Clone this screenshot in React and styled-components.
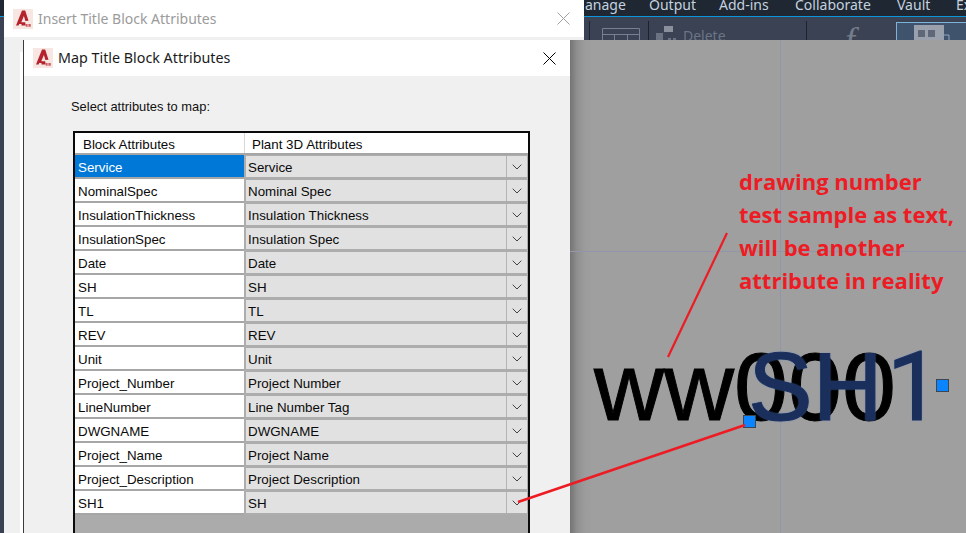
import React from "react";
import styled, { createGlobalStyle } from "styled-components";

const Global = createGlobalStyle`
  html, body { margin: 0; padding: 0; background: #3a4150; overflow: hidden; }
  #root { width: 966px; height: 533px; }
`;

const Desktop = styled.div`
  position: relative;
  width: 966px;
  height: 533px;
  overflow: hidden;
  display: flex;
  flex-direction: column;
  background: #3a4150;
  font-family: "Liberation Sans", Arial, sans-serif;
`;

/* Host application: ribbon + drawing canvas */
const Menu = styled.div`
  height: 16px;
  flex: none;
  display: flex;
  align-items: flex-end;
  overflow: hidden;
  padding-left: 585px;
  background: #1f2733;
  border-bottom: 1px solid #0b96dc;
  font: 14px/20px "Noto Sans", sans-serif;
  color: #c4d2df;
`;
const MenuItem = styled.span`
  flex: none;
  width: ${(p) => p.$w}px;
  padding-bottom: 1px;
`;
const Ribbon = styled.div`
  height: 23px;
  flex: none;
  display: flex;
  padding-left: 589px;
  overflow: hidden;
  background: #3a4253;
  color: #6f7888;
`;
const RibbonSep = styled.span`
  flex: none;
  width: 1px;
  height: 23px;
  margin-top: 4px;
  background: #1d222c;
`;
const RibbonSlot = styled.div`
  flex: none;
  width: ${(p) => p.$w}px;
  display: flex;
  align-items: flex-start;
  gap: 3px;
  padding-top: ${(p) => p.$top || 5}px;
  padding-left: ${(p) => p.$left || 0}px;
  box-sizing: border-box;
`;
const DeleteLabel = styled.span`
  font: 14px/20px "Noto Sans", sans-serif;
  color: #6c7586;
`;
const FLabel = styled.span`
  font: italic 36px/36px "Liberation Serif", serif;
  color: #757d8b;
`;
const ActiveTool = styled.div`
  flex: none;
  width: 72px;
  height: 26px;
  margin-top: 5px;
  padding: 2px 0 0 17px;
  box-sizing: border-box;
  background: #40536c;
  border: 1px solid #7fb2d8;
`;

const Canvas = styled.main`
  position: relative;
  z-index: 2;
  flex: 1;
  margin-left: 570px;
  overflow: hidden;
  background: linear-gradient(90deg, #747474 0, #8f8f8f 7px, #9c9c9c 15px, #9f9f9f 22px);
`;
const AxisV = styled.i`
  position: absolute;
  left: 210px;
  top: 0;
  bottom: 0;
  width: 1px;
  background: #9296aa;
`;
const AxisH = styled.i`
  position: absolute;
  left: 0;
  right: 0;
  top: 211px;
  height: 1px;
  background: #9296aa;
`;
const Note = styled.div`
  position: absolute;
  left: 169px;
  top: 125px;
  font: 700 22px/33px "Open Sans", sans-serif;
  color: #ed1c24;
  white-space: nowrap;
`;
const DrawingText = styled.div`
  position: absolute;
  left: ${(p) => p.$x}px;
  top: ${(p) => p.$y}px;
  font: 400 97px/110px "Liberation Sans", sans-serif;
  white-space: nowrap;
  color: ${(p) => p.$color};
  -webkit-text-stroke: 1px ${(p) => p.$color};
  text-shadow: ${(p) => (p.$glow ? "0 0 2px #5f82c4" : "none")};
`;
const FootlessDigit = styled.span`
  font-family: Roboto, sans-serif;
  margin-left: 4px;
`;
const Grip = styled.i`
  position: absolute;
  left: ${(p) => p.$x}px;
  top: ${(p) => p.$y}px;
  width: 13px;
  height: 13px;
  box-sizing: border-box;
  background: #0a84ff;
  border: 1px solid #3d4650;
`;

/* Dialogs */
const BackDialog = styled.section`
  position: absolute;
  z-index: 1;
  left: 4px;
  top: 0;
  width: 580px;
  height: 533px;
  display: flex;
  flex-direction: column;
  background: #f0f0f0;
`;
const TitleBar = styled.header`
  flex: none;
  height: ${(p) => p.$h}px;
  display: flex;
  align-items: center;
  padding: 0 ${(p) => p.$right}px 0 ${(p) => p.$left}px;
  box-sizing: border-box;
  background: #fff;
  color: ${(p) => (p.$dim ? "#9b9b9b" : "#1a1a1a")};
  font: ${(p) => (p.$dim ? 14 : 14.3)}px/20px "Noto Sans", sans-serif;
`;
const TitleText = styled.span`
  flex: 1;
  margin-left: 5px;
  white-space: nowrap;
`;
const InnerEdge = styled.div`
  flex: 1;
  width: 3px;
  margin: 15px 0 0 16px;
  background: #fff;
`;
const FrontDialog = styled.section`
  position: absolute;
  z-index: 3;
  left: 23px;
  top: 40px;
  width: 547px;
  height: 493px;
  box-sizing: border-box;
  border-left: 1px solid #3c3c3c;
  display: flex;
  flex-direction: column;
  background: #f0f0f0;
`;
const DialogBody = styled.div`
  flex: 1;
  display: flex;
  flex-direction: column;
  padding: 24px 0 0 47px;
`;
const Prompt = styled.div`
  height: 31px;
  font: 12.9px/14px "Liberation Sans", sans-serif;
  color: #111;
`;
const Table = styled.div`
  flex: 1;
  width: 457px;
  box-sizing: border-box;
  margin-left: 2px;
  border: 2px solid #0a0a0a;
  border-bottom: none;
  background: #ababab;
  font: 13.35px/15px "Liberation Sans", sans-serif;
  color: #0a0a0a;
`;
const HeaderRow = styled.div`
  display: grid;
  grid-template-columns: 170px 283px;
  height: 22px;
  box-sizing: border-box;
  background: #fff;
  border-bottom: 2px solid #a6a6a6;
`;
const HeaderCell = styled.div`
  padding: ${(p) => (p.$first ? "4px 0 0 8px" : "4px 0 0 7px")};
  border-right: ${(p) => (p.$first ? "1px solid #d8d8d8" : "none")};
`;
const Row = styled.div`
  display: grid;
  grid-template-columns: 169px 284px;
  height: 24px;
`;
const NameCell = styled.div`
  box-sizing: border-box;
  padding: 5px 0 0 3px;
  background: ${(p) => (p.$selected ? "#0078d7" : "#fff")};
  color: ${(p) => (p.$selected ? "#fff" : "#0a0a0a")};
  border-bottom: 2px solid #a6a6a6;
`;
const Combo = styled.div`
  box-sizing: border-box;
  display: flex;
  background: #e1e1e1;
  border: 2px solid #adadad;
  border-width: 1px 1px 2px 2px;
`;
const ComboValue = styled.span`
  flex: 1;
  padding: 4px 0 0 2px;
`;
const ComboArrow = styled.span`
  flex: none;
  width: 20px;
  display: flex;
  align-items: center;
  justify-content: center;
  border-left: 1px solid #b4b4b4;
  color: #444;
`;
const Overlay = styled.svg`
  position: absolute;
  z-index: 5;
  left: 0;
  top: 0;
  pointer-events: none;
`;

const Logo = () => (
  <svg width="20" height="20" viewBox="0 0 20 20">
    <rect width="20" height="20" fill="#f7e6e1" />
    <path d="M3 16.5 9 1.5h3.2l3.3 10.3-3.1.3-1.5-5-2.6 6.2h3.9l.5 3.2H8.500v-1.600H6.200l-.6 1.600z" fill="#b6212e" />
    <path d="M12.800 15h1v2.800h-1zM14.500 15h1v2.800h-1zM16.200 15h1.400v2.800h-1.400z" fill="#c23a44" />
  </svg>
);
const CloseIcon = ({ color }) => (
  <svg width="13" height="13" viewBox="0 0 13 13">
    <path d="M.5.5l12 12M12.500.5l-12 12" stroke={color} strokeWidth="1" fill="none" />
  </svg>
);
const Chevron = () => (
  <svg width="10" height="6" viewBox="0 0 10 6">
    <path d="M.7.7 5 5l4.300-4.300" stroke="currentColor" strokeWidth="1" fill="none" />
  </svg>
);

const rows = [
  ["Service", "Service"],
  ["NominalSpec", "Nominal Spec"],
  ["InsulationThickness", "Insulation Thickness"],
  ["InsulationSpec", "Insulation Spec"],
  ["Date", "Date"],
  ["SH", "SH"],
  ["TL", "TL"],
  ["REV", "REV"],
  ["Unit", "Unit"],
  ["Project_Number", "Project Number"],
  ["LineNumber", "Line Number Tag"],
  ["DWGNAME", "DWGNAME"],
  ["Project_Name", "Project Name"],
  ["Project_Description", "Project Description"],
  ["SH1", "SH"],
];

const menu = [
  ["anage", 64],
  ["Output", 70],
  ["Add-ins", 76],
  ["Collaborate", 102],
  ["Vault", 59],
  ["Express Tools", 100],
];

export default function App() {
  return (
    <Desktop>
      <Global />
      <Menu>
        {menu.map(([label, w]) => (
          <MenuItem key={label} $w={w}>{label}</MenuItem>
        ))}
      </Menu>
      <Ribbon>
        <RibbonSep />
        <RibbonSlot $w={58} $left={12} $top={11}>
          <svg width="38" height="12" viewBox="0 0 38 12">
            <path d="M.5 12V.5h37V12M.5 6.500h37M12.500 6.500V12M25.500 6.500V12" stroke="#778092" fill="none" />
          </svg>
        </RibbonSlot>
        <RibbonSep />
        <RibbonSlot $w={157} $left={7} $top={9}>
          <svg width="24" height="24" viewBox="0 0 24 24">
            <path d="M8 0h9v6H8z" fill="#8a919d" />
            <path d="M0 7h7v7H0z" fill="#6b7382" />
            <path d="M12 12h3v3h-3zM17 12h3v3h-3z" fill="#6b7382" />
          </svg>
          <DeleteLabel>Delete</DeleteLabel>
        </RibbonSlot>
        <RibbonSep />
        <RibbonSlot $w={89} $left={38} $top={5}>
          <FLabel>f</FLabel>
        </RibbonSlot>
        <ActiveTool>
          <svg width="36" height="20" viewBox="0 0 36 20">
            <path d="M0 0h30v20H0z" fill="#9aa1ad" />
            <path d="M4 5h7v7H4zM14 5h7v7h-7z" fill="#5f6878" />
            <path d="M26 10h9v10" stroke="#8fa6bf" fill="none" />
          </svg>
        </ActiveTool>
      </Ribbon>

      <Canvas>
        <AxisV />
        <AxisH />
        <Note>
          drawing number
          <br />
          test sample as text,
          <br />
          will be another
          <br />
          attribute in reality
        </Note>
        <DrawingText $x={24} $y={292} $color="#000">ww000</DrawingText>
        <DrawingText $x={178} $y={292} $color="#1a2f5c" $glow>SH<FootlessDigit>1</FootlessDigit></DrawingText>
        <Grip $x={173} $y={375} />
        <Grip $x={366} $y={339} />
      </Canvas>

      <BackDialog>
        <TitleBar $h={37} $left={9} $right={14} $dim>
          <Logo />
          <TitleText>Insert Title Block Attributes</TitleText>
          <CloseIcon color="#a0a0a0" />
        </TitleBar>
        <InnerEdge />
      </BackDialog>

      <FrontDialog>
        <TitleBar $h={36} $left={9} $right={14}>
          <Logo />
          <TitleText>Map Title Block Attributes</TitleText>
          <CloseIcon color="#000" />
        </TitleBar>
        <DialogBody>
          <Prompt>Select attributes to map:</Prompt>
          <Table>
            <HeaderRow>
              <HeaderCell $first>Block Attributes</HeaderCell>
              <HeaderCell>Plant 3D Attributes</HeaderCell>
            </HeaderRow>
            {rows.map(([name, value], i) => (
              <Row key={name}>
                <NameCell $selected={i === 0}>{name}</NameCell>
                <Combo>
                  <ComboValue>{value}</ComboValue>
                  <ComboArrow><Chevron /></ComboArrow>
                </Combo>
              </Row>
            ))}
          </Table>
        </DialogBody>
      </FrontDialog>

      <Overlay width="966" height="533" viewBox="0 0 966 533">
        <path d="M518 502 745 425" stroke="#ed1c24" strokeWidth="2.6" fill="none" />
        <path d="M668 357 727 233" stroke="#ed1c24" strokeWidth="2.2" fill="none" />
      </Overlay>
    </Desktop>
  );
}
